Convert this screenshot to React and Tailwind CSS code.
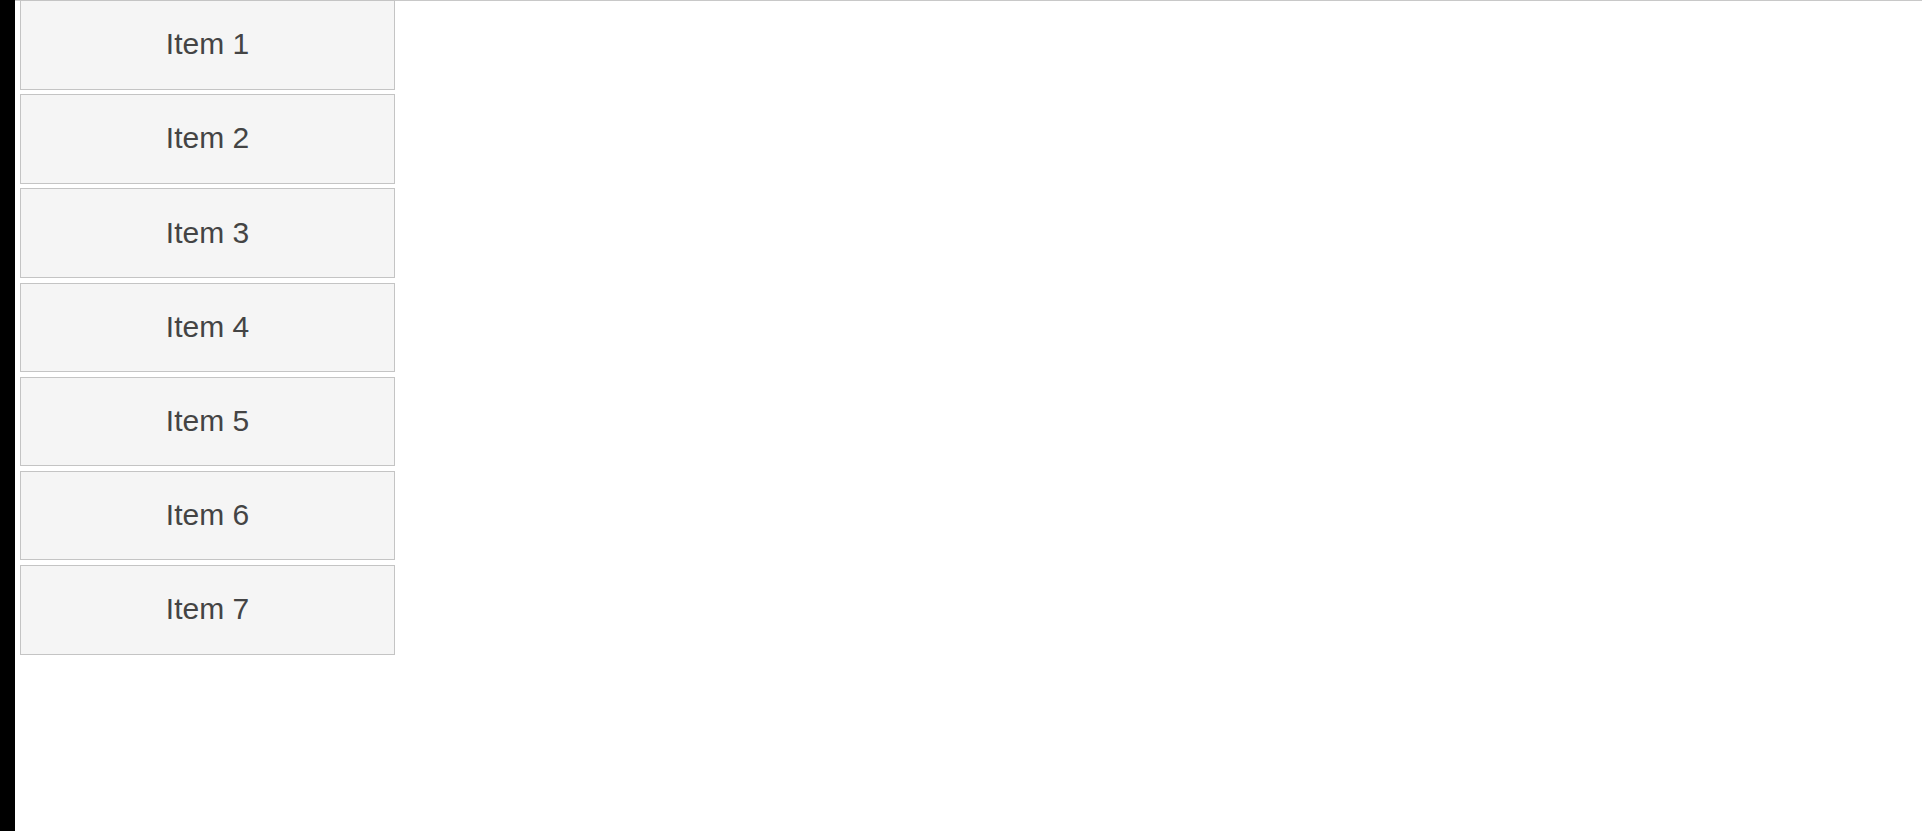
import React from "react";

export default function App() {
  const items = [1, 2, 3, 4, 5, 6, 7];
  return (
    <div className="flex h-[831px] w-[1922px] overflow-hidden bg-white" style={{ fontFamily: '"Liberation Sans", Arial, sans-serif' }}>
      <div className="h-full w-[15px] shrink-0 bg-black" />
      <div className="flex-1 border-t border-[#c8c8c8]">
        <div className="-mt-[1px] ml-[5px] flex w-[375px] flex-col gap-[4.7px]">
          {items.map((n) => (
            <div
              key={n}
              className="flex h-[89.5px] items-center justify-center border border-[#c4c4c4] bg-[#f5f5f5] pb-[2px] text-[30px] text-[#444444]"
            >
              Item {n}
            </div>
          ))}
        </div>
      </div>
    </div>
  );
}
